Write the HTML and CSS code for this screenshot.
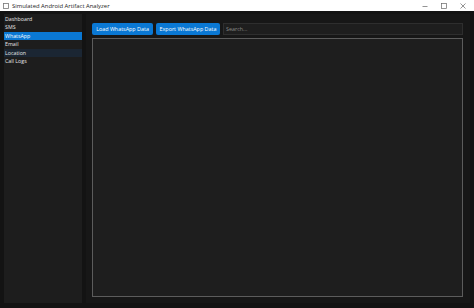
FILE: index.html
```html
<!DOCTYPE html>
<html lang="en">
<head>
    <meta charset="UTF-8">
    <title>Simulated Android Artifact Analyzer</title>

    <link rel="stylesheet" href="styles.css">
</head>
<body>
<div class="titlebar">
  <div class="title-left">
    <svg class="app-icon" width="6" height="6" viewBox="0 0 6 6">
      <rect x="0.5" y="0.5" width="5" height="5" fill="none" stroke="#777" stroke-width="0.8"/>
    </svg>
    <span class="title-text">Simulated Android Artifact Analyzer</span>
  </div>
  <div class="controls">
    <svg width="6" height="6" viewBox="0 0 6 6"><line x1="0.5" y1="3.5" x2="5.5" y2="3.5" stroke="#666" stroke-width="0.7"/></svg>
    <svg width="6" height="6" viewBox="0 0 6 6"><rect x="0.5" y="0.5" width="5" height="5" fill="none" stroke="#666" stroke-width="0.7"/></svg>
    <svg width="6" height="6" viewBox="0 0 6 6"><path d="M0.5 0.5 L5.5 5.5 M5.5 0.5 L0.5 5.5" stroke="#666" stroke-width="0.7"/></svg>
  </div>
</div>

<div class="app">
  <div class="sidebar">
    <div class="nav-item">Dashboard</div>
    <div class="nav-item">SMS</div>
    <div class="nav-item is--active">WhatsApp</div>
    <div class="nav-item">Email</div>
    <div class="nav-item is--hover">Location</div>
    <div class="nav-item">Call Logs</div>
  </div>

  <div class="content">
    <div class="toolbar">
      <button class="btn">Load WhatsApp Data</button>
      <button class="btn">Export WhatsApp Data</button>
      <input class="search" type="text" placeholder="Search...">
    </div>
    <div class="data-view"></div>
  </div>
</div>
</body>
</html>
```

FILE: styles.css
```css
html, body {
  margin: 0;
  padding: 0;
  height: 100%;
}

body {
  display: flex;
  flex-direction: column;
  background-color: #131313;
  font-family: "Open Sans", "Liberation Sans", sans-serif;
  font-size: 5.4px;
  color: #e8e8e8;
  overflow: hidden;
}

.titlebar {
  display: flex;
  justify-content: space-between;
  align-items: center;
  height: 11px;
  background-color: #ffffff;
  color: #222;
  flex-shrink: 0;
}

.title-left {
  display: flex;
  align-items: center;
  gap: 3px;
  padding-left: 3px;
}

.title-text {
  font-size: 5.9px;
}

.controls {
  display: flex;
  align-items: center;
  gap: 13px;
  padding-right: 8px;
}

.app {
  display: flex;
  flex: 1;
  padding: 3px 4px 5px 4px;
  gap: 4px;
  min-height: 0;
}

.sidebar {
  width: 78px;
  background-color: #1d1d1d;
  padding-top: 1px;
  flex-shrink: 0;
}

.nav-item {
  height: 8.4px;
  line-height: 8.4px;
  padding-left: 1px;
  font-size: 5.3px;
  color: #e6e6e6;
}

.nav-item.is--active {
  background-color: #0a78d4;
  color: #ffffff;
}

.nav-item.is--hover {
  background-color: #1b2633;
}

.content {
  flex: 1;
  display: flex;
  flex-direction: column;
  background-color: #171717;
  padding: 9px 7px 6px 6px;
  gap: 3px;
}

.toolbar {
  display: flex;
  gap: 3px;
  height: 12px;
}

.btn {
  font-family: inherit;
  font-size: 5.4px;
  color: #ffffff;
  background-color: #0a78d4;
  border: none;
  border-radius: 2px;
  padding: 0;
  height: 12px;
  white-space: nowrap;
  flex-shrink: 0;
}

.btn:first-child {
  width: 61px;
}

.btn:nth-child(2) {
  width: 64px;
}

.search {
  flex: 1;
  min-width: 0;
  font-family: inherit;
  font-size: 5.4px;
  height: 12px;
  box-sizing: border-box;
  background-color: #1e1e1e;
  border: 1px solid #2e2e2e;
  color: #ccc;
  padding: 0 2px;
  outline: none;
}

.search::placeholder {
  color: #8a8a8a;
}

.data-view {
  flex: 1;
  background-color: #1e1e1e;
  border: 1px solid #5c5c5c;
}
```
